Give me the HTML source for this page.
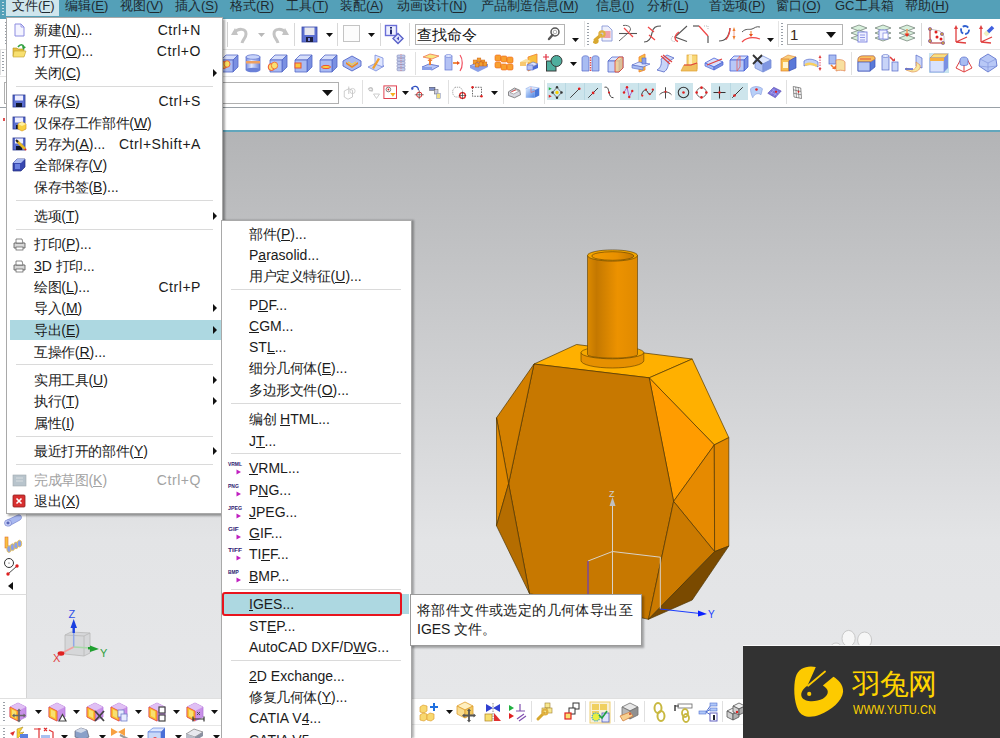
<!DOCTYPE html><html><head><meta charset="utf-8"><style>
html,body{margin:0;padding:0;width:1000px;height:738px;overflow:hidden;background:#fff;font-family:"Liberation Sans", sans-serif;}
.t{position:absolute;white-space:nowrap;line-height:16px;font-size:14px;color:#1b1b1b;font-weight:350;}
.m{position:absolute;white-space:nowrap;line-height:16px;font-size:13px;color:#1e2a30;font-weight:350;}
u{text-decoration:none;border-bottom:1px solid currentColor;line-height:12px;display:inline-block}
svg{position:absolute;overflow:visible}

</style></head><body>
<div style="position:absolute;left:27px;top:132px;width:973px;height:566px;background:linear-gradient(#b3b4b6 0%,#e3e4e6 72%,#e6e7e9 100%);"></div>
<div style="position:absolute;left:0px;top:132px;width:27px;height:566px;background:#fff;border-right:1px solid #d4d4d4;box-sizing:border-box;"></div>
<div style="position:absolute;left:0px;top:108px;width:27px;height:487px;background:#fff;border-right:1px solid #d4d4d4;border-bottom:1px solid #dcdcdc;box-sizing:border-box;"></div>
<div style="position:absolute;left:0px;top:18px;width:1000px;height:114px;background:#fff;"></div>
<div style="position:absolute;left:0px;top:49px;width:1000px;height:1px;background:#e3e3e3;"></div>
<div style="position:absolute;left:0px;top:76px;width:1000px;height:1px;background:#e3e3e3;"></div>
<div style="position:absolute;left:0px;top:107px;width:1000px;height:1px;background:#9aa1a7;"></div>
<div style="position:absolute;left:27px;top:130px;width:973px;height:2px;background:#62a6bc;"></div>
<div style="position:absolute;left:0px;top:0px;width:1000px;height:19px;background:#54a0b8;"></div>
<div style="position:absolute;left:6px;top:0px;width:53px;height:16px;background:#cfe5ec;"></div>
<div class="m" style="left:12px;top:-2px">文件(<u>F</u>)</div>
<div class="m" style="left:65px;top:-2px">编辑(<u>E</u>)</div>
<div class="m" style="left:120px;top:-2px">视图(<u>V</u>)</div>
<div class="m" style="left:175px;top:-2px">插入(<u>S</u>)</div>
<div class="m" style="left:230px;top:-2px">格式(<u>R</u>)</div>
<div class="m" style="left:286px;top:-2px">工具(<u>T</u>)</div>
<div class="m" style="left:340px;top:-2px">装配(<u>A</u>)</div>
<div class="m" style="left:397px;top:-2px">动画设计(<u>N</u>)</div>
<div class="m" style="left:481px;top:-2px">产品制造信息(<u>M</u>)</div>
<div class="m" style="left:596px;top:-2px">信息(<u>I</u>)</div>
<div class="m" style="left:647px;top:-2px">分析(<u>L</u>)</div>
<div class="m" style="left:709px;top:-2px">首选项(<u>P</u>)</div>
<div class="m" style="left:776px;top:-2px">窗口(<u>O</u>)</div>
<div class="m" style="left:835px;top:-2px">GC工具箱</div>
<div class="m" style="left:905px;top:-2px">帮助(<u>H</u>)</div>
<svg style="left:50px;top:605px" width="70" height="60" viewBox="0 0 70 60">
<g stroke="#b8b8b8" stroke-width="0.8">
<polygon points="15,30 21,27 40,28 40,48 34,51 15,49" fill="#d4d5d7" fill-opacity="0.9"/>
<path d="M15,30 L34,31 L40,28 M34,31 V51" fill="none"/>
</g>
<path d="M23.7,42 V22" stroke="#90a8e8" stroke-width="1.5"/>
<path d="M23.7,14 L20.5,23 H27 Z" fill="#1a40e0"/><rect x="22.5" y="22" width="2.4" height="6" fill="#1a40e0"/>
<text x="18.5" y="13" font-size="11" fill="#3050e8" font-family="Liberation Sans">Z</text>
<path d="M23.7,42 L12,48" stroke="#f0a0a0" stroke-width="1.5"/><ellipse cx="11" cy="48.5" rx="3.4" ry="2.2" fill="#e02020"/>
<text x="3" y="57" font-size="11" fill="#e04040" font-family="Liberation Sans">X</text>
<path d="M23.7,42 L40,43" stroke="#a8d8a8" stroke-width="1.5"/><path d="M49,44 L40,40.5 V47 Z" fill="#20a030"/><rect x="38" y="42" width="4" height="2.4" fill="#20a030"/>
<text x="50" y="52" font-size="11" fill="#30a040" font-family="Liberation Sans">Y</text>
</svg>
<svg style="left:0;top:0" width="1000" height="738" viewBox="0 0 1000 738">
<defs>
<linearGradient id="cyl" x1="0" x2="1" y1="0" y2="0">
<stop offset="0" stop-color="#dc8a00"/><stop offset="0.18" stop-color="#c47800"/><stop offset="0.6" stop-color="#ec9200"/><stop offset="1" stop-color="#e08a00"/></linearGradient>
<linearGradient id="hole" x1="0" x2="1" y1="0" y2="0">
<stop offset="0" stop-color="#f49c00"/><stop offset="0.6" stop-color="#e89000"/><stop offset="1" stop-color="#c27600"/></linearGradient>
</defs>
<g stroke="#4d3400" stroke-width="0.8" stroke-linejoin="round" stroke-opacity="0.85">
<polygon points="534,364 576.5,344.5 692.2,359 649.2,377.8" fill="#ffb000"/>
<polygon points="649.2,377.8 692.2,359 728.8,437.6 714.3,444.9" fill="#ffb000"/>
<polygon points="649.2,377.8 714.3,444.9 673.6,501.4" fill="#ff9c00"/>
<polygon points="534,364 649.2,377.8 673.6,501.4 648.5,619.3 529.5,593.6 508.6,483.7" fill="#c77800"/>
<polygon points="534,364 496.5,417.8 508.6,483.7" fill="#d38000"/>
<polygon points="496.5,417.8 496.5,525.8 508.6,483.7" fill="#df8800"/>
<polygon points="508.6,483.7 496.5,525.8 529.5,593.6" fill="#b56d00"/>
<polygon points="673.6,501.4 714.3,444.9 714.6,551.6" fill="#e68a00"/>
<polygon points="714.3,444.9 728.8,437.6 728.8,546.1 714.6,551.6" fill="#e28800"/>
<polygon points="673.6,501.4 714.6,551.6 648.5,619.3" fill="#cb7a00"/>
<polygon points="714.6,551.6 728.8,546.1 692.2,600 648.5,619.3" fill="#7a4a00"/>
</g>
<g stroke="#4d3400" stroke-width="0.7" stroke-opacity="0.8">
<path d="M581,352.6 L581,360.6 A31.4,7.4 0 0 0 643.8,360.6 L643.8,352.6 Z" fill="#e69000"/>
<ellipse cx="612.4" cy="352.6" rx="31.4" ry="6.2" fill="#f6a800"/>
<path d="M587.5,255.5 L587.5,354.5 A25,3.6 0 0 0 637.5,354.5 L637.5,255.5 Z" fill="url(#cyl)"/>
<ellipse cx="612.5" cy="255.5" rx="25" ry="5.6" fill="#f4a600"/>
<ellipse cx="612.8" cy="256" rx="21" ry="4.3" fill="url(#hole)"/>
</g>
<g stroke="#d9d2c8" stroke-width="1" fill="none">
<path d="M612.5,506 L612.5,594"/>
<path d="M612.5,551.5 L660.3,557.2 L660.3,609"/>
<path d="M612.5,551.5 L588,561"/>
</g>
<path d="M588,561 L588,594" stroke="#6a3cc0" stroke-width="1.2"/>
<path d="M612.5,497 l-3,9 h6 Z" fill="#c0c0c0"/>
<text x="609" y="497" font-size="9" fill="#d0d0d0" font-family="Liberation Sans">Z</text>
<path d="M660,609 L700,613.5" stroke="#1a3cff" stroke-width="1"/>
<path d="M707,614 l-9,-3.5 l0,6 Z" fill="#0a20ff"/>
<text x="708" y="618" font-size="10" fill="#2040ff" font-family="Liberation Sans">Y</text>
</svg>
<div style="position:absolute;left:0px;top:698px;width:743px;height:40px;background:#fff;"></div>
<div style="position:absolute;left:0px;top:698px;width:743px;height:1px;background:#e0e0e0;"></div>
<div style="position:absolute;left:0px;top:725px;width:222px;height:1px;background:#e6e6e6;"></div>
<div style="position:absolute;left:412px;top:724px;width:331px;height:1px;background:#ececec;"></div>
<div style="position:absolute;left:227px;top:22px;width:1px;height:25px;background:#d0d0d0"></div><div style="position:absolute;left:2px;top:2px;width:2px;height:1px;background:#c8dde4"></div><div style="position:absolute;left:2px;top:5px;width:2px;height:1px;background:#c8dde4"></div><div style="position:absolute;left:2px;top:8px;width:2px;height:1px;background:#c8dde4"></div><div style="position:absolute;left:2px;top:11px;width:2px;height:1px;background:#c8dde4"></div><div style="position:absolute;left:2px;top:14px;width:2px;height:1px;background:#c8dde4"></div><div style="position:absolute;left:5px;top:22px;width:2px;height:1px;background:#9aa0a8"></div><div style="position:absolute;left:5px;top:25px;width:2px;height:1px;background:#9aa0a8"></div><div style="position:absolute;left:5px;top:28px;width:2px;height:1px;background:#9aa0a8"></div><div style="position:absolute;left:5px;top:31px;width:2px;height:1px;background:#9aa0a8"></div><div style="position:absolute;left:5px;top:34px;width:2px;height:1px;background:#9aa0a8"></div><div style="position:absolute;left:5px;top:37px;width:2px;height:1px;background:#9aa0a8"></div><div style="position:absolute;left:5px;top:40px;width:2px;height:1px;background:#9aa0a8"></div><div style="position:absolute;left:5px;top:43px;width:2px;height:1px;background:#9aa0a8"></div><div style="position:absolute;left:2px;top:52px;width:2px;height:1px;background:#9aa0a8"></div><div style="position:absolute;left:2px;top:55px;width:2px;height:1px;background:#9aa0a8"></div><div style="position:absolute;left:2px;top:58px;width:2px;height:1px;background:#9aa0a8"></div><div style="position:absolute;left:2px;top:61px;width:2px;height:1px;background:#9aa0a8"></div><div style="position:absolute;left:2px;top:64px;width:2px;height:1px;background:#9aa0a8"></div><div style="position:absolute;left:2px;top:67px;width:2px;height:1px;background:#9aa0a8"></div><div style="position:absolute;left:2px;top:70px;width:2px;height:1px;background:#9aa0a8"></div><div style="position:absolute;left:0px;top:50px;width:1px;height:25px;background:#e0e0e0"></div><div style="position:absolute;left:4px;top:82px;width:6px;height:20px;border:1px solid #b0b0b0;background:#fff"></div><div style="position:absolute;left:3px;top:118px;width:2px;height:3px;background:#e05050"></div><svg style="left:230px;top:24px" width="20.0" height="20.0" viewBox="0 0 20 20"><path d="M5,4 L1,11 L8,11 Z" fill="#c4c4c4"/><path d="M4,9 C8,4 16,4 16,10 C16,14 13,15 12,19" stroke="#c4c4c4" stroke-width="3" fill="none"/></svg><svg style="left:258px;top:33px" width="7.0" height="4.0" viewBox="0 0 7 4"><path d="M0,0 H7 L3.5,4 Z" fill="#b8b8b8"/></svg><svg style="left:270px;top:24px" width="20.0" height="20.0" viewBox="0 0 20 20"><path d="M15,4 L19,11 L12,11 Z" fill="#c4c4c4"/><path d="M16,9 C12,4 4,4 4,10 C4,14 7,15 8,19" stroke="#c4c4c4" stroke-width="3" fill="none"/></svg><div style="position:absolute;left:294px;top:23px;width:1px;height:23px;background:#d8d8d8"></div><svg style="left:300px;top:24px" width="20.0" height="20.0" viewBox="0 0 20 20"><rect x="2" y="3" width="15" height="15" fill="#5b6fd0" stroke="#3a4aa8" stroke-width="0.8"/><rect x="4.5" y="3.5" width="10" height="7.5" fill="#e8e8ee"/><rect x="6" y="13" width="7" height="5" fill="#1e2040"/><rect x="8" y="14" width="2" height="3" fill="#7a8ae0"/></svg><svg style="left:326px;top:33px" width="7.0" height="4.0" viewBox="0 0 7 4"><path d="M0,0 H7 L3.5,4 Z" fill="#111"/></svg><div style="position:absolute;left:337px;top:23px;width:1px;height:23px;background:#d8d8d8"></div><div style="position:absolute;left:343px;top:25px;width:15px;height:15px;border:1px solid #c4c4c4;background:#fcfcfc"></div><svg style="left:368px;top:33px" width="7.0" height="4.0" viewBox="0 0 7 4"><path d="M0,0 H7 L3.5,4 Z" fill="#111"/></svg><div style="position:absolute;left:380px;top:23px;width:1px;height:23px;background:#d8d8d8"></div><svg style="left:384px;top:24px" width="20.0" height="20.0" viewBox="0 0 20 20"><rect x="1.5" y="1.5" width="11" height="10" fill="#eef0ff" stroke="#6b6fd8" stroke-width="1.4"/><rect x="6" y="3" width="2" height="1.6" fill="#222a70"/><rect x="6" y="5.5" width="2" height="4.8" fill="#222a70"/><polygon points="14,9.5 19,14.5 14,19.5 9,14.5" fill="#dfe3ff" stroke="#5860c8" stroke-width="1.4"/><path d="M15,12.5 L12.5,14.5 L15,16.5 Z" fill="#4a52c0"/></svg><div style="position:absolute;left:409px;top:23px;width:1px;height:23px;background:#d8d8d8"></div><div style="position:absolute;left:415px;top:24px;width:148px;height:19px;border:1px solid #b4b4b4;background:#fff"></div><div class="t" style="left:417px;top:26px;font-size:15px;line-height:17px;color:#111">查找命令</div><svg style="left:547px;top:26px" width="14.0" height="15.0" viewBox="0 0 14 15"><circle cx="8" cy="6" r="4" fill="#fff" stroke="#555" stroke-width="1.5"/><circle cx="8" cy="6" r="1.8" fill="none" stroke="#999" stroke-width="0.8"/><path d="M5.5,9 L2,13" stroke="#555" stroke-width="2.4" stroke-linecap="round"/></svg><svg style="left:572px;top:38px" width="7.0" height="4.0" viewBox="0 0 7 4"><path d="M0,0 H7 L3.5,4 Z" fill="#111"/></svg><div style="position:absolute;left:584px;top:21px;width:1px;height:26px;background:#e4e4e4"></div><div style="position:absolute;left:587px;top:23px;width:2px;height:1px;background:#9aa0a8"></div><div style="position:absolute;left:587px;top:26px;width:2px;height:1px;background:#9aa0a8"></div><div style="position:absolute;left:587px;top:29px;width:2px;height:1px;background:#9aa0a8"></div><div style="position:absolute;left:587px;top:32px;width:2px;height:1px;background:#9aa0a8"></div><div style="position:absolute;left:587px;top:35px;width:2px;height:1px;background:#9aa0a8"></div><div style="position:absolute;left:587px;top:38px;width:2px;height:1px;background:#9aa0a8"></div><div style="position:absolute;left:587px;top:41px;width:2px;height:1px;background:#9aa0a8"></div><div style="position:absolute;left:587px;top:44px;width:2px;height:1px;background:#9aa0a8"></div><svg style="left:593px;top:24px" width="20.0" height="20.0" viewBox="0 0 20 20"><path d="M9,2 H15 L19,6 V17 H9 Z" fill="#eef0fb" stroke="#8a98d8" stroke-width="0.9"/><rect x="10.5" y="7" width="7" height="7" fill="#f0a0a8"/><path d="M2,16 L8,11 M1.5,18 C3,19 4.5,18 4.2,16.5" stroke="#d8a830" stroke-width="3" fill="none" stroke-linecap="round"/><circle cx="9" cy="10" r="2.6" fill="none" stroke="#e0b040" stroke-width="2.2"/></svg><svg style="left:618px;top:24px" width="20.0" height="20.0" viewBox="0 0 20 20"><path d="M1,9.5 H19" stroke="#555" stroke-width="1.1"/><path d="M5,1.5 C12,0.5 15,5 10,9 C7,12 4,14 1,17" stroke="#555" stroke-width="0.9" fill="none"/><path d="M6,4 L15,13" stroke="#f04848" stroke-width="1.3"/></svg><svg style="left:643px;top:24px" width="20.0" height="20.0" viewBox="0 0 20 20"><path d="M1,18 C6,18 8,15 9,9 C10,3 13,2 18,2" stroke="#555" stroke-width="1.2" fill="none"/><path d="M5,3 L11,8 M6,11 L12,16" stroke="#f04848" stroke-width="1.3"/></svg><svg style="left:668px;top:24px" width="20.0" height="20.0" viewBox="0 0 20 20"><path d="M19,2 L7,13 L19,17.5" stroke="#555" stroke-width="1.1" fill="none"/><path d="M11,8 C5,12 7,17 10,17.5" stroke="#f04848" stroke-width="1.4" fill="none"/><path d="M5,12 C2,15 3,17.5 7,17.5" stroke="#999" stroke-width="0.8" stroke-dasharray="1,1" fill="none"/></svg><svg style="left:692px;top:24px" width="20.0" height="20.0" viewBox="0 0 20 20"><path d="M1,2 H7" stroke="#555" stroke-width="1.2"/><path d="M7,2 L16,12" stroke="#f04848" stroke-width="1.3" fill="none"/><path d="M16,12 V19" stroke="#555" stroke-width="1.2"/><path d="M12,2 H16 V6" stroke="#aaa" stroke-width="0.8" stroke-dasharray="1,1" fill="none"/></svg><svg style="left:717px;top:24px" width="20.0" height="20.0" viewBox="0 0 20 20"><path d="M2,17 C8,17 12,14 13,4" stroke="#555" stroke-width="1.2" fill="none"/><path d="M9,15.5 C11,13 13,9 13,4" stroke="#f04848" stroke-width="1.3" fill="none"/><path d="M17,6 V13" stroke="#f0a090" stroke-width="1"/><path d="M17,3 L15.5,7 H18.5 Z M17,16 L15.5,12 H18.5 Z" fill="#f08030"/></svg><svg style="left:741px;top:24px" width="20.0" height="20.0" viewBox="0 0 20 20"><path d="M1,8 C5,4 8,6 11,5 C14,4 15,2 19,3" stroke="#555" stroke-width="1" fill="none"/><path d="M1,18 C6,13 13,13 19,15" stroke="#f04848" stroke-width="1.3" fill="none"/><path d="M10,7 V11" stroke="#f0a060" stroke-width="1.4"/><path d="M8,10 L10,13 L12,10 Z" fill="#e85020"/></svg><svg style="left:767px;top:38px" width="7.0" height="4.0" viewBox="0 0 7 4"><path d="M0,0 H7 L3.5,4 Z" fill="#111"/></svg><div style="position:absolute;left:778px;top:21px;width:1px;height:26px;background:#e4e4e4"></div><div style="position:absolute;left:781px;top:23px;width:2px;height:1px;background:#9aa0a8"></div><div style="position:absolute;left:781px;top:26px;width:2px;height:1px;background:#9aa0a8"></div><div style="position:absolute;left:781px;top:29px;width:2px;height:1px;background:#9aa0a8"></div><div style="position:absolute;left:781px;top:32px;width:2px;height:1px;background:#9aa0a8"></div><div style="position:absolute;left:781px;top:35px;width:2px;height:1px;background:#9aa0a8"></div><div style="position:absolute;left:781px;top:38px;width:2px;height:1px;background:#9aa0a8"></div><div style="position:absolute;left:781px;top:41px;width:2px;height:1px;background:#9aa0a8"></div><div style="position:absolute;left:781px;top:44px;width:2px;height:1px;background:#9aa0a8"></div><div style="position:absolute;left:787px;top:24px;width:54px;height:19px;border:1px solid #b4b4b4;background:#fff"></div><div class="t" style="left:790px;top:26px;font-size:15px;line-height:17px;color:#3a2a20">1</div><svg style="left:826px;top:32px" width="10.0" height="6.0" viewBox="0 0 10 6"><path d="M0,0 H10 L5,6 Z" fill="#111"/></svg><svg style="left:849px;top:24px" width="20.0" height="20.0" viewBox="0 0 20 20"><polygon points="10,1 18,4 10,7 2,4" fill="#d8f0dc" stroke="#6a7a70" stroke-width="0.7"/><polygon points="10,6 18,9 10,12 2,9" fill="#d8f0dc" stroke="#6a7a70" stroke-width="0.7"/><polygon points="10,11 18,14 10,17 2,14" fill="#d8f0dc" stroke="#6a7a70" stroke-width="0.7"/><rect x="9" y="8" width="9" height="10" fill="#eef0ff" stroke="#7a82e0" stroke-width="0.9"/><path d="M11,11 H16 M11,13.5 H16 M11,16 H16" stroke="#7a82e0" stroke-width="0.8"/></svg><svg style="left:873px;top:24px" width="20.0" height="20.0" viewBox="0 0 20 20"><polygon points="10,1 18,4 10,7 2,4" fill="#d8f0dc" stroke="#6a7a70" stroke-width="0.7"/><polygon points="10,6 18,9 10,12 2,9" fill="#d8f0dc" stroke="#6a7a70" stroke-width="0.7"/><polygon points="10,11 18,14 10,17 2,14" fill="#d8f0dc" stroke="#6a7a70" stroke-width="0.7"/><rect x="6" y="6" width="8" height="9" fill="#eef0ff" stroke="#7a82e0" stroke-width="0.9"/><rect x="10" y="9" width="5" height="6" fill="#fff" stroke="#7a82e0" stroke-width="0.7"/></svg><svg style="left:897px;top:24px" width="20.0" height="20.0" viewBox="0 0 20 20"><polygon points="10,1 18,4 10,7 2,4" fill="#d8f0dc" stroke="#6a7a70" stroke-width="0.7"/><polygon points="10,6 18,9 10,12 2,9" fill="#d8f0dc" stroke="#6a7a70" stroke-width="0.7"/><polygon points="10,11 18,14 10,17 2,14" fill="#d8f0dc" stroke="#6a7a70" stroke-width="0.7"/><path d="M10,5 V11" stroke="#f0a060" stroke-width="1.5"/><path d="M7.5,9.5 L10,13 L12.5,9.5 Z" fill="#e83020"/></svg><div style="position:absolute;left:921px;top:23px;width:1px;height:23px;background:#d8d8d8"></div><svg style="left:927px;top:25px" width="20.0" height="20.0" viewBox="0 0 20 20"><path d="M3,4 L13,6 L17,11 L17,18 L5,18 L3,12 Z" fill="none" stroke="#999" stroke-width="0.6"/><path d="M3,4 V18 H17" stroke="#d04040" stroke-width="1" fill="none"/><circle cx="3" cy="4" r="1.6" fill="#c8a040" stroke="#8040a0" stroke-width="0.6"/><circle cx="15" cy="9" r="1.6" fill="#c8a040" stroke="#8040a0" stroke-width="0.6"/><circle cx="3" cy="16" r="1.6" fill="#c8a040" stroke="#8040a0" stroke-width="0.6"/><circle cx="16" cy="18" r="1.6" fill="#c8a040" stroke="#8040a0" stroke-width="0.6"/><circle cx="9" cy="7" r="1.5" fill="#e02020"/><circle cx="10" cy="12" r="1.5" fill="#e02020"/><circle cx="14" cy="14" r="1.5" fill="#e02020"/></svg><svg style="left:951px;top:24px" width="20.0" height="20.0" viewBox="0 0 20 20"><path d="M5,18 V3 M5,18 L16,13 M5,18 L15,19" stroke="#e04040" stroke-width="1.3" fill="none"/><path d="M5,1 L3,5 H7 Z" fill="#e04040"/><circle cx="14" cy="6" r="4" fill="none" stroke="#3060d0" stroke-width="1.8" stroke-dasharray="6,2"/></svg><svg style="left:976px;top:24px" width="20.0" height="20.0" viewBox="0 0 20 20"><path d="M5,18 V3 M5,18 L16,13 M5,18 L15,19" stroke="#e04040" stroke-width="1.3" fill="none"/><path d="M5,1 L3,5 H7 Z" fill="#e04040"/><path d="M10,10 L17,3" stroke="#4060e0" stroke-width="3.5"/><path d="M9,11 L12,8" stroke="#f0f0c0" stroke-width="4"/></svg><svg style="left:218px;top:53px" width="20.0" height="20.0" viewBox="0 0 20 20"><g stroke="#5468c8" stroke-width="0.8" stroke-linejoin="round"><polygon points="3,7 8,2 20,2 15,7" fill="#d6defa"/><polygon points="15,7 20,2 20,14 15,19" fill="#7a90e2"/><rect x="3" y="7" width="12" height="12" fill="#a9baf2"/></g><ellipse cx="6" cy="12" rx="3.2" ry="3.4" fill="#f8d040" stroke="#f05030" stroke-width="1"/><ellipse cx="9" cy="11" rx="3" ry="3.3" fill="#f8e060" stroke="#f05030" stroke-width="0.8"/></svg><svg style="left:243px;top:53px" width="20.0" height="20.0" viewBox="0 0 20 20"><defs><linearGradient id="gc" x1="0" x2="1"><stop offset="0" stop-color="#7b90e0"/><stop offset="0.4" stop-color="#dfe6ff"/><stop offset="1" stop-color="#6a80d8"/></linearGradient></defs><rect x="3" y="4" width="14" height="13" fill="url(#gc)" stroke="#5468c8" stroke-width="0.7"/><ellipse cx="10" cy="17" rx="7" ry="2.3" fill="#6a80d8"/><rect x="3" y="8" width="14" height="2.5" fill="#f0a060"/><ellipse cx="10" cy="4" rx="7" ry="2.3" fill="#c8d4fa" stroke="#5468c8" stroke-width="0.7"/></svg><svg style="left:267px;top:53px" width="20.0" height="20.0" viewBox="0 0 20 20"><g stroke="#5468c8" stroke-width="0.8" stroke-linejoin="round"><polygon points="3,7 8,2 20,2 15,7" fill="#d6defa"/><polygon points="15,7 20,2 20,14 15,19" fill="#7a90e2"/><rect x="3" y="7" width="12" height="12" fill="#a9baf2"/></g><ellipse cx="4.5" cy="14" rx="3.3" ry="3.5" fill="#f8e070" stroke="#f05030" stroke-width="1"/><ellipse cx="7.5" cy="12.5" rx="3.2" ry="3.4" fill="#f8e070" stroke="#f06030" stroke-width="0.8"/></svg><svg style="left:292px;top:53px" width="20.0" height="20.0" viewBox="0 0 20 20"><g stroke="#5468c8" stroke-width="0.8" stroke-linejoin="round"><polygon points="3,7 8,2 20,2 15,7" fill="#d6defa"/><polygon points="15,7 20,2 20,14 15,19" fill="#7a90e2"/><rect x="3" y="7" width="12" height="12" fill="#a9baf2"/></g><rect x="3" y="10" width="6" height="5" fill="#f8c840" stroke="#f05030" stroke-width="1"/></svg><svg style="left:317px;top:53px" width="20.0" height="20.0" viewBox="0 0 20 20"><g stroke="#5468c8" stroke-width="0.8" stroke-linejoin="round"><polygon points="3,7 8,2 20,2 15,7" fill="#d6defa"/><polygon points="15,7 20,2 20,14 15,19" fill="#7a90e2"/><rect x="3" y="7" width="12" height="12" fill="#a9baf2"/></g><ellipse cx="9" cy="14" rx="4.5" ry="1.6" fill="#f8d040" stroke="#f05030" stroke-width="1"/></svg><svg style="left:342px;top:53px" width="20.0" height="20.0" viewBox="0 0 20 20"><polygon points="10,3 19,8 19,13 10,18 1,13 1,8" fill="#a8b8f0" stroke="#5468c8" stroke-width="0.9"/><path d="M4,9 L10,13 L16,9 L16,11 L10,15 L4,11 Z" fill="#f08a20"/><path d="M6,9 L10,11.5 L14,9" stroke="#f8d040" stroke-width="1.2" fill="none"/></svg><svg style="left:366px;top:53px" width="20.0" height="20.0" viewBox="0 0 20 20"><polygon points="2,14 10,10 18,13 10,18" fill="#c8d4f8" stroke="#6a7ed8" stroke-width="0.7"/><polygon points="9,2 17,5 17,14 9,11" fill="#dfe6ff" stroke="#6a7ed8" stroke-width="0.7"/><path d="M6,15 L12,5 L14,6 L8,16 Z" fill="#f0a030"/></svg><svg style="left:391px;top:53px" width="20.0" height="20.0" viewBox="0 0 20 20"><rect x="6" y="2.0" width="8" height="3" rx="1" fill="#c4ccec" stroke="#8088b8" stroke-width="0.6"/><rect x="6" y="5.2" width="8" height="3" rx="1" fill="#c4ccec" stroke="#8088b8" stroke-width="0.6"/><rect x="6" y="8.4" width="8" height="3" rx="1" fill="#c4ccec" stroke="#8088b8" stroke-width="0.6"/><rect x="6" y="11.600000000000001" width="8" height="3" rx="1" fill="#c4ccec" stroke="#8088b8" stroke-width="0.6"/><rect x="6" y="14.8" width="8" height="3" rx="1" fill="#c4ccec" stroke="#8088b8" stroke-width="0.6"/><path d="M10,1 V19" stroke="#e06060" stroke-width="0.6" stroke-dasharray="1,1"/></svg><div style="position:absolute;left:415px;top:52px;width:1px;height:23px;background:#e0e0e0"></div><svg style="left:420px;top:53px" width="20.0" height="20.0" viewBox="0 0 20 20"><polygon points="2,14 9,11 19,13 12,17" fill="#b8c6f6" stroke="#5468c8" stroke-width="0.8"/><rect x="2" y="14" width="10" height="3" fill="#8aa0e8"/><polygon points="3,4 10,1 19,3 12,6" fill="#f8e880" stroke="#f08060" stroke-width="0.9"/><path d="M10,12 V7" stroke="#f08030" stroke-width="2"/><path d="M7.5,8 L10,5 L12.5,8 Z" fill="#f08030"/></svg><svg style="left:444px;top:53px" width="20.0" height="20.0" viewBox="0 0 20 20"><rect x="1" y="3" width="7" height="14" fill="#b4c2f4" stroke="#6074d0" stroke-width="0.7"/><ellipse cx="4.5" cy="3" rx="3.5" ry="1.5" fill="#dfe6ff" stroke="#6074d0" stroke-width="0.6"/><path d="M9,10 H14" stroke="#f08030" stroke-width="1.8"/><path d="M13,8 L16,10 L13,12 Z" fill="#e85020"/><path d="M16,2 C19,6 19,14 16,18" stroke="#f05060" stroke-width="1.2" fill="none"/></svg><svg style="left:469px;top:53px" width="20.0" height="20.0" viewBox="0 0 20 20"><polygon points="1,13 11,8 19,12 9,17" fill="#b8c6f6" stroke="#5468c8" stroke-width="0.8"/><path d="M1,13 V15 L9,19 L19,14 V12" fill="#8aa0e8"/><rect x="4.2" y="7" width="3.6" height="4" fill="#f0a030" stroke="#d06010" stroke-width="0.5"/><rect x="8.2" y="5" width="3.6" height="4" fill="#f0a030" stroke="#d06010" stroke-width="0.5"/><rect x="12.2" y="7" width="3.6" height="4" fill="#f0a030" stroke="#d06010" stroke-width="0.5"/><rect x="6.2" y="10" width="3.6" height="4" fill="#f0a030" stroke="#d06010" stroke-width="0.5"/><rect x="10.2" y="9" width="3.6" height="4" fill="#f0a030" stroke="#d06010" stroke-width="0.5"/><rect x="14.2" y="9" width="3.6" height="4" fill="#f0a030" stroke="#d06010" stroke-width="0.5"/></svg><svg style="left:494px;top:53px" width="20.0" height="20.0" viewBox="0 0 20 20"><rect x="1" y="2" width="6" height="6" rx="1.5" fill="#f8a030" stroke="#f06010" stroke-width="0.6"/><rect x="7" y="3" width="6" height="6" rx="1.5" fill="#f8a030" stroke="#f06010" stroke-width="0.6"/><rect x="13" y="4" width="6" height="6" rx="1.5" fill="#f8a030" stroke="#f06010" stroke-width="0.6"/><rect x="1" y="9" width="6" height="6" rx="1.5" fill="#f8a030" stroke="#f06010" stroke-width="0.6"/><rect x="7" y="11" width="6" height="6" rx="1.5" fill="#f8a030" stroke="#f06010" stroke-width="0.6"/><rect x="13" y="11" width="6" height="6" rx="1.5" fill="#f8a030" stroke="#f06010" stroke-width="0.6"/></svg><svg style="left:519px;top:53px" width="20.0" height="20.0" viewBox="0 0 20 20"><polygon points="9,4 18,1 18,14 9,18" fill="#f8c040" stroke="#f08030" stroke-width="0.8"/><polygon points="1,9 7,6 12,8 6,11" fill="#f8e0a0"/><rect x="1" y="9" width="6" height="4" fill="#f8c870"/><polygon points="8,12 14,9 19,11 13,14" fill="#dfe6ff" stroke="#5468c8" stroke-width="0.6"/><rect x="8" y="12" width="6" height="5" fill="#b4c2f4" stroke="#5468c8" stroke-width="0.6"/><polygon points="14,14 19,11 19,15 14,17" fill="#4a6ad8"/></svg><svg style="left:544px;top:53px" width="20.0" height="20.0" viewBox="0 0 20 20"><rect x="2.5" y="8" width="9.5" height="10" fill="#4fae9e" stroke="#3a3a3a" stroke-width="1"/><circle cx="12.5" cy="8" r="5.5" fill="#4fae9e" stroke="#3a3a3a" stroke-width="1"/><path d="M2,1 V7 M-1,4 H5" stroke="#e03040" stroke-width="1.2"/></svg><svg style="left:570px;top:62px" width="7.0" height="4.0" viewBox="0 0 7 4"><path d="M0,0 H7 L3.5,4 Z" fill="#111"/></svg><svg style="left:581px;top:53px" width="20.0" height="20.0" viewBox="0 0 20 20"><path d="M1,18 V5 C1,2 8,2 8,5 V18 Z" fill="#a8bcf2" stroke="#5468c8" stroke-width="0.7"/><path d="M11,18 V5 C11,2 18,2 18,5 V18 Z" fill="#a8bcf2" stroke="#5468c8" stroke-width="0.7"/><path d="M9.5,4 V18" stroke="#e05050" stroke-width="1.4" stroke-dasharray="1.5,1"/></svg><svg style="left:606px;top:53px" width="20.0" height="20.0" viewBox="0 0 20 20"><g stroke="#5468c8" stroke-width="0.8" stroke-linejoin="round"><polygon points="2,8 6,4 17,4 13,8" fill="#dfe6ff"/><polygon points="13,8 17,4 17,15 13,19" fill="#7a90e2"/><rect x="2" y="8" width="11" height="11" fill="#c4d0f8"/></g><path d="M9,8 L13,4 H17 V15 L13,19 H9 Z" fill="#f8d080" fill-opacity="0.75" stroke="#e04030" stroke-width="0.8"/></svg><svg style="left:631px;top:53px" width="20.0" height="20.0" viewBox="0 0 20 20"><polygon points="8,4 14,1 14,17 8,19" fill="#f8c040" stroke="#f08030" stroke-width="0.8"/><polygon points="1,12 8,9 19,11 12,14" fill="#dfe6ff" stroke="#5468c8" stroke-width="0.7"/><polygon points="1,12 12,14 12,17 1,15" fill="#a8bcf2" stroke="#5468c8" stroke-width="0.6"/><rect x="11" y="5" width="4" height="6" fill="#8aa0e8" stroke="#5468c8" stroke-width="0.6"/></svg><svg style="left:655px;top:53px" width="20.0" height="20.0" viewBox="0 0 20 20"><path d="M2,17 C6,15 7,10 6,6 L12,2 L19,5 L13,9 C14,13 12,17 9,19 Z" fill="#c8d4f8" stroke="#5468c8" stroke-width="0.8"/><path d="M6,3 L15,11 M8,2 L17,9" stroke="#e04040" stroke-width="1.2"/></svg><svg style="left:680px;top:53px" width="20.0" height="20.0" viewBox="0 0 20 20"><rect x="7" y="2" width="10" height="14" fill="#f8d878" stroke="#e0a030" stroke-width="0.7"/><rect x="9" y="2" width="3" height="14" fill="#fff0c0"/><path d="M1,18 L4,12 L11,12 L17,10 V18 Z" fill="#f0c060" stroke="#e0a030" stroke-width="0.7"/><path d="M4,12 L11,12 L17,10" stroke="#e04040" stroke-width="1.2" fill="none"/></svg><svg style="left:704px;top:53px" width="20.0" height="20.0" viewBox="0 0 20 20"><polygon points="1,10 10,5 19,9 10,14" fill="#d8e0fc" stroke="#4a62d8" stroke-width="0.8"/><polygon points="1,10 10,14 10,17 1,13" fill="#a8bcf2" stroke="#4a62d8" stroke-width="0.7"/><polygon points="10,14 19,9 19,12 10,17" fill="#7890e0" stroke="#4a62d8" stroke-width="0.7"/><path d="M3,12 L18,6" stroke="#e04040" stroke-width="1.2"/></svg><svg style="left:729px;top:53px" width="20.0" height="20.0" viewBox="0 0 20 20"><g stroke="#4a62d8" stroke-width="0.8" stroke-linejoin="round"><polygon points="1,7 5,3 19,3 15,7" fill="#d8e0fc"/><polygon points="15,7 19,3 19,14 15,18" fill="#7890e0"/><rect x="1" y="7" width="14" height="11" fill="#b8c8f6"/></g><path d="M8,7 L11,3 V14 L8,18 Z" fill="none" stroke="#e06060" stroke-width="0.8"/></svg><svg style="left:752px;top:53px" width="20.0" height="20.0" viewBox="0 0 20 20"><g stroke="#7890d8" stroke-width="0.8" stroke-linejoin="round"><polygon points="11,3 19,7.0 11,11 3,7.0" fill="#dfe8ff"/><polygon points="3,7.0 11,11 11,19 3,15.0" fill="#b0c2f4"/><polygon points="11,11 19,7.0 19,15.0 11,19" fill="#7f96e2"/></g><path d="M1,2 L10,11 M10,2 L1,11" stroke="#333" stroke-width="1.8"/></svg><svg style="left:778px;top:53px" width="20.0" height="20.0" viewBox="0 0 20 20"><polygon points="3,6 10,2 18,4 11,8" fill="#f8d080" stroke="#e08030" stroke-width="0.6"/><rect x="3" y="6" width="8" height="12" fill="#f8c050" stroke="#e08030" stroke-width="0.7"/><polygon points="11,8 18,4 18,15 11,18" fill="#5a78d8" stroke="#3a52b8" stroke-width="0.7"/><rect x="5" y="9" width="5" height="6" fill="#fff4d0"/></svg><svg style="left:802px;top:53px" width="20.0" height="20.0" viewBox="0 0 20 20"><path d="M2,8 C6,5 12,6 16,9 L16,14 C12,11 6,11 2,13 Z" fill="#c0d0f8" stroke="#5468c8" stroke-width="0.7"/><path d="M3,12 C7,10 12,11 15,13" stroke="#f8d060" stroke-width="2.5" fill="none"/><path d="M18,4 V16" stroke="#e04060" stroke-width="1" stroke-dasharray="1.5,1"/><path d="M16.5,5 L18,2 L19.5,5 Z M16.5,15 L18,18 L19.5,15 Z" fill="#e04040"/></svg><svg style="left:827px;top:53px" width="20.0" height="20.0" viewBox="0 0 20 20"><rect x="2" y="2" width="7" height="9" fill="#a8bcf2" stroke="#5468c8" stroke-width="0.7"/><path d="M9,7 C13,6 17,7 18,9 V18 C15,17 12,17 9,18 Z" fill="#f8e0a0" stroke="#e08050" stroke-width="0.7"/><path d="M4,12 L8,16" stroke="#f08030" stroke-width="1.6"/><path d="M5,16 H9 V12 Z" fill="#f07030"/></svg><div style="position:absolute;left:851px;top:52px;width:1px;height:23px;background:#e0e0e0"></div><svg style="left:856px;top:53px" width="20.0" height="20.0" viewBox="0 0 20 20"><path d="M2,7 C2,4 4,3 7,3 H17 C18,3 19,4 19,6 V14 L14,18 H2 Z" fill="#5a7ad8" stroke="#3a52b8" stroke-width="0.7"/><path d="M2,7 C2,4 4,3 7,3 H17 C18,3 19,4 19,6 L14,9 H2 Z" fill="#f8c060" stroke="#e08030" stroke-width="0.7"/><rect x="2" y="9" width="12" height="9" fill="#b8c8f6" stroke="#3a52b8" stroke-width="0.7"/><path d="M4,6 H15" stroke="#e05040" stroke-width="1"/></svg><svg style="left:880px;top:53px" width="20.0" height="20.0" viewBox="0 0 20 20"><rect x="2" y="3" width="7" height="14" fill="#c8d4f8" stroke="#5468c8" stroke-width="0.7"/><ellipse cx="5.5" cy="3" rx="3.5" ry="1.5" fill="#e8eeff" stroke="#5468c8" stroke-width="0.6"/><rect x="12" y="9" width="6" height="9" fill="#c8d4f8" stroke="#5468c8" stroke-width="0.7"/><path d="M10,4 L14,8" stroke="#e04040" stroke-width="1.6"/><path d="M12,8 H15 V5 Z" fill="#e04040"/></svg><svg style="left:904px;top:53px" width="20.0" height="20.0" viewBox="0 0 20 20"><polygon points="12,2 18,5 18,15 12,13" fill="#c8d4f8" stroke="#5468c8" stroke-width="0.7"/><path d="M2,15 L8,17 C12,16 13,13 12,9 L16,12 C17,16 14,19 8,19 L2,17 Z" fill="#f8e8a0" stroke="#e09050" stroke-width="0.7"/><path d="M1,16 H9" stroke="#4a62d8" stroke-width="1.5"/></svg><svg style="left:929px;top:53px" width="20.0" height="20.0" viewBox="0 0 20 20"><rect x="0" y="0" width="20" height="20" fill="#c8e4ee"/><polygon points="1,5 5,1 19,1 15,5" fill="#f8e080" stroke="#e08030" stroke-width="0.6"/><rect x="1" y="5" width="14" height="14" fill="#d8e2fc" stroke="#6a7ed8" stroke-width="0.6"/><polygon points="15,5 19,1 19,15 15,19" fill="#7a90e2"/><rect x="1" y="5" width="14" height="3" fill="#f8b040"/></svg><svg style="left:954px;top:53px" width="20.0" height="20.0" viewBox="0 0 20 20"><path d="M2,15 L7,6 H13 L18,15 L10,19 Z" fill="none" stroke="#e04040" stroke-width="1"/><path d="M10,12 V19" stroke="#e04040"/><path d="M6,7 C6,3 14,3 14,7 V11 C14,13 6,13 6,11 Z" fill="#a8bcf2" stroke="#5468c8" stroke-width="0.7"/></svg><svg style="left:978px;top:53px" width="20.0" height="20.0" viewBox="0 0 20 20"><polygon points="10,1 18,6 19,13 10,19 1,13 2,6" fill="#b8c8f6" stroke="#5468c8" stroke-width="0.8"/><path d="M2,6 L10,10 L18,6 M10,10 V19 M1,13 L10,14 L19,13" stroke="#7a8ed8" stroke-width="0.6" fill="none"/></svg><div style="position:absolute;left:200px;top:82px;width:137px;height:20px;border:1px solid #b0b0b0;background:#fff"></div><svg style="left:322px;top:90px" width="11.0" height="6.0" viewBox="0 0 11 6"><path d="M0,0 H11 L5.5,6 Z" fill="#111"/></svg><svg style="left:342px;top:85px" width="15.0" height="15.0" viewBox="0 0 20 20"><path d="M3,8 L9,5 L14,7 V16 L8,19 L3,16 Z" fill="none" stroke="#bbb" stroke-width="1"/><circle cx="14" cy="8" r="3.5" fill="none" stroke="#c4c4c4"/><path d="M9,2 V12" stroke="#bbb"/></svg><div style="position:absolute;left:362px;top:80px;width:1px;height:24px;background:#e0e0e0"></div><svg style="left:366px;top:85px" width="15.0" height="15.0" viewBox="0 0 20 20"><path d="M3,6 C6,2 10,4 8,8 L4,7" stroke="#c4c4c4" stroke-width="2" fill="none"/><path d="M10,12 H18 L14,18 Z" fill="none" stroke="#c8c8c8" stroke-width="1.2"/></svg><svg style="left:383px;top:85px" width="14.4" height="14.4" viewBox="0 0 16 16"><rect x="1" y="1" width="14" height="14" fill="#fff" stroke="#e04050" stroke-width="1.1"/><circle cx="6" cy="5" r="2.6" fill="none" stroke="#555" stroke-width="0.8"/><circle cx="6" cy="5" r="1" fill="#e02020"/><path d="M8,9 H14 L11,13 Z" fill="#f8b020"/></svg><svg style="left:402px;top:91px" width="7.0" height="4.0" viewBox="0 0 7 4"><path d="M0,0 H7 L3.5,4 Z" fill="#111"/></svg><svg style="left:411px;top:85px" width="15.0" height="15.0" viewBox="0 0 20 20"><path d="M1,5 C3,0 10,1 10,7" stroke="#3050c0" stroke-width="1.6" fill="none"/><path d="M0,3 L1,7 L4,5 Z" fill="#3050c0"/><circle cx="11" cy="13" r="3.5" fill="none" stroke="#e02020" stroke-width="1.3"/><path d="M11,7 V19 M5,13 H17" stroke="#333" stroke-width="0.8"/></svg><svg style="left:429px;top:85px" width="15.0" height="15.0" viewBox="0 0 20 20"><rect x="1" y="3" width="7" height="4" fill="#8090c8" stroke="#334" stroke-width="0.6"/><rect x="7" y="6" width="5" height="6" fill="#ccd" stroke="#555" stroke-width="0.6"/><rect x="10" y="11" width="5" height="7" fill="#f0e080" stroke="#8090c8" stroke-width="0.7"/></svg><div style="position:absolute;left:448px;top:80px;width:1px;height:24px;background:#e0e0e0"></div><svg style="left:452px;top:85px" width="15.0" height="15.0" viewBox="0 0 20 20"><path d="M4,3 H11 L14,7 V13 L11,16 H4 L1,12 V7 Z" fill="none" stroke="#777" stroke-width="0.9" stroke-dasharray="1.5,1.2"/><circle cx="14" cy="14" r="3.8" fill="none" stroke="#e02020" stroke-width="1.8"/><path d="M14,9 V19 M9,14 H19" stroke="#333" stroke-width="0.8"/></svg><svg style="left:471px;top:85px" width="15.0" height="15.0" viewBox="0 0 20 20"><rect x="2" y="3" width="12" height="12" fill="none" stroke="#444" stroke-width="1.1" stroke-dasharray="2,1.5"/><circle cx="2" cy="3" r="1.6" fill="#e02020"/><circle cx="14" cy="15" r="1.6" fill="#e02020"/></svg><svg style="left:491px;top:91px" width="7.0" height="4.0" viewBox="0 0 7 4"><path d="M0,0 H7 L3.5,4 Z" fill="#111"/></svg><div style="position:absolute;left:503px;top:80px;width:1px;height:24px;background:#e0e0e0"></div><svg style="left:507px;top:85px" width="15.0" height="15.0" viewBox="0 0 20 20"><path d="M2,9 L10,4 L17,7 L18,13 L10,17 L2,14 Z" fill="#d8d8e0" stroke="#555" stroke-width="0.9"/><path d="M4,10 L11,6 L16,8 L9,12 Z" fill="#fff" stroke="#666" stroke-width="0.6"/><path d="M6,9 L12,6.5" stroke="#e04040" stroke-width="1.2"/></svg><svg style="left:525px;top:85px" width="15.0" height="15.0" viewBox="0 0 20 20"><defs><linearGradient id="gbb" x1="0" x2="1" y1="0" y2="1"><stop offset="0" stop-color="#d8e8ff"/><stop offset="1" stop-color="#4a80e0"/></linearGradient></defs><polygon points="1,5 7,2 19,4 13,7" fill="#e8f0ff" stroke="#6a90e0" stroke-width="0.6"/><rect x="1" y="5" width="12" height="12" fill="url(#gbb)"/><polygon points="13,7 19,4 19,14 13,17" fill="#4a78d8"/><path d="M8,3 V10 L13,8" stroke="#e06060" stroke-width="0.8" fill="none"/></svg><div style="position:absolute;left:544px;top:80px;width:1px;height:24px;background:#e0e0e0"></div><div style="position:absolute;left:547px;top:83px;width:55px;height:17px;background:#cde5ec"></div><div style="position:absolute;left:620px;top:83px;width:36px;height:17px;background:#cde5ec"></div><div style="position:absolute;left:675px;top:83px;width:18px;height:17px;background:#cde5ec"></div><div style="position:absolute;left:711px;top:83px;width:37px;height:17px;background:#cde5ec"></div><div style="position:absolute;left:565px;top:83px;width:1px;height:17px;background:#b8d8e2"></div><div style="position:absolute;left:584px;top:83px;width:1px;height:17px;background:#b8d8e2"></div><div style="position:absolute;left:638px;top:83px;width:1px;height:17px;background:#b8d8e2"></div><div style="position:absolute;left:730px;top:83px;width:1px;height:17px;background:#b8d8e2"></div><svg style="left:548px;top:85px" width="15.0" height="15.0" viewBox="0 0 20 20"><path d="M1,3 L5,5 L1,7 Z" fill="#20b040"/><path d="M1,13 L5,15 L1,17 Z" fill="#e02020"/><polygon points="12,3 18,10 12,17 6,10" fill="none" stroke="#333" stroke-width="0.8"/><circle cx="12" cy="3" r="1.6" fill="#333"/><circle cx="18" cy="10" r="1.6" fill="#333"/><circle cx="12" cy="17" r="1.6" fill="#333"/><circle cx="6" cy="10" r="1.6" fill="#333"/><circle cx="12" cy="10" r="2.2" fill="#f8d000"/></svg><svg style="left:568px;top:85px" width="15.0" height="15.0" viewBox="0 0 20 20"><path d="M3,17 L15,5" stroke="#333" stroke-width="1.2"/><circle cx="15" cy="5" r="1.8" fill="#e02020"/></svg><svg style="left:586px;top:85px" width="15.0" height="15.0" viewBox="0 0 20 20"><path d="M3,17 L16,4" stroke="#333" stroke-width="1.2"/><circle cx="9.5" cy="10.5" r="1.8" fill="#e02020"/></svg><svg style="left:603px;top:85px" width="15.0" height="15.0" viewBox="0 0 20 20"><path d="M2,3 C7,2 7,6 8,10 C9,14 10,17 14,17" stroke="#333" stroke-width="1.3" fill="none"/><circle cx="8" cy="10" r="1.4" fill="#e02020"/></svg><svg style="left:621px;top:85px" width="15.0" height="15.0" viewBox="0 0 20 20"><path d="M4,10 L8,3 L11,16 L15,8" stroke="#a040d0" stroke-width="1" fill="none"/><circle cx="4" cy="10" r="1.6" fill="#e02020"/><circle cx="8" cy="3" r="1.6" fill="#e02020"/><circle cx="11" cy="16" r="1.6" fill="#e02020"/><circle cx="15" cy="8" r="1.6" fill="#e02020"/></svg><svg style="left:640px;top:85px" width="15.0" height="15.0" viewBox="0 0 20 20"><path d="M2,13 C5,4 9,6 11,11 C13,15 16,10 18,6" stroke="#333" stroke-width="1.3" fill="none"/><circle cx="3" cy="14" r="1.5" fill="#e02020"/><circle cx="8" cy="6" r="1.5" fill="#e02020"/><circle cx="13" cy="12" r="1.5" fill="#e02020"/><circle cx="17" cy="6" r="1.5" fill="#e02020"/></svg><svg style="left:658px;top:85px" width="15.0" height="15.0" viewBox="0 0 20 20"><path d="M2,13 C6,8 14,8 18,13" stroke="#333" stroke-width="1.2" fill="none"/><path d="M10,3 V18" stroke="#333" stroke-width="1.2"/><circle cx="10" cy="9" r="1.4" fill="#e02020"/></svg><svg style="left:676px;top:85px" width="15.0" height="15.0" viewBox="0 0 20 20"><circle cx="10" cy="10" r="7" fill="none" stroke="#333" stroke-width="1.4"/><circle cx="10" cy="10" r="1.7" fill="#e02020"/></svg><svg style="left:694px;top:85px" width="15.0" height="15.0" viewBox="0 0 20 20"><circle cx="10" cy="10" r="6.5" fill="none" stroke="#444" stroke-width="1"/><circle cx="10" cy="3.5" r="1.7" fill="#e02020"/><circle cx="16.5" cy="10" r="1.7" fill="#e02020"/><circle cx="10" cy="16.5" r="1.7" fill="#e02020"/><circle cx="3.5" cy="10" r="1.7" fill="#e02020"/></svg><svg style="left:712px;top:85px" width="15.0" height="15.0" viewBox="0 0 20 20"><path d="M10,2 V18 M2,10 H18" stroke="#333" stroke-width="1.4"/><circle cx="10" cy="10" r="1.6" fill="#e02020"/></svg><svg style="left:730px;top:85px" width="15.0" height="15.0" viewBox="0 0 20 20"><path d="M3,17 L17,3" stroke="#333" stroke-width="1.3"/><circle cx="6" cy="14" r="1.8" fill="#e02020"/></svg><svg style="left:749px;top:85px" width="15.0" height="15.0" viewBox="0 0 20 20"><path d="M2,5 C6,1 13,1 18,5 L16,13 C12,10 7,12 5,17 C3,13 2,9 2,5 Z" fill="#b8d0f8" stroke="#7a90d8" stroke-width="0.7"/><circle cx="10" cy="6" r="1.7" fill="#e02020"/></svg><svg style="left:767px;top:85px" width="15.0" height="15.0" viewBox="0 0 20 20"><polygon points="1,11 9,3 19,8 11,17" fill="#7a72d8" stroke="#4a40a8" stroke-width="0.7"/><path d="M4,9 L14,14 M7,6 L16,11 M5,12 L10,5 M9,15 L14,7" stroke="#c8c0f8" stroke-width="0.6"/><circle cx="12" cy="9" r="1.5" fill="#e02020"/></svg><div style="position:absolute;left:786px;top:80px;width:1px;height:24px;background:#e0e0e0"></div><svg style="left:791px;top:85px" width="15.0" height="15.0" viewBox="0 0 20 20"><polygon points="3,2 13,4 14,18 4,16" fill="none" stroke="#444" stroke-width="0.8"/><path d="M3.3,6.5 L13.3,8.5 M3.6,11 L13.6,13 M6.3,2.6 L7.3,16.6 M9.6,3.2 L10.6,17.2" stroke="#444" stroke-width="0.7"/><circle cx="10" cy="9" r="1.2" fill="#e02020"/></svg><svg style="left:3px;top:511px" width="20.0" height="20.0" viewBox="0 0 20 20"><path d="M4,9 L15,4 C18,3 20,7 17,9 L6,15 Z" fill="#a8b8f0" stroke="#6a78c8" stroke-width="0.6"/><ellipse cx="5" cy="12" rx="3.5" ry="3.2" fill="#c8d0f8" stroke="#6a78c8" stroke-width="0.6"/><ellipse cx="5" cy="12" rx="1.6" ry="1.4" fill="#5a68b8"/></svg><svg style="left:3px;top:535px" width="20.0" height="20.0" viewBox="0 0 20 20"><rect x="2" y="2" width="3" height="11" fill="#f8c040" stroke="#e07030" stroke-width="0.6"/><ellipse cx="6.0" cy="14.0" rx="2.2" ry="3.4" fill="#8aa0e8" stroke="#f0c040" stroke-width="0.8"/><ellipse cx="9.5" cy="12.2" rx="2.2" ry="3.4" fill="#8aa0e8" stroke="#f0c040" stroke-width="0.8"/><ellipse cx="13.0" cy="10.4" rx="2.2" ry="3.4" fill="#8aa0e8" stroke="#f0c040" stroke-width="0.8"/><ellipse cx="16.5" cy="8.6" rx="2.2" ry="3.4" fill="#8aa0e8" stroke="#f0c040" stroke-width="0.8"/></svg><svg style="left:3px;top:557px" width="20.0" height="20.0" viewBox="0 0 20 20"><circle cx="6" cy="6" r="4.5" fill="none" stroke="#333" stroke-width="1"/><circle cx="6" cy="6" r="0.6" fill="#333"/><path d="M5,17 L14,9" stroke="#333" stroke-width="0.9"/><circle cx="5" cy="17" r="1.7" fill="#e02020"/><circle cx="14" cy="9" r="1.7" fill="#e02020"/></svg><svg style="left:8px;top:582px" width="6.0" height="8.0" viewBox="0 0 6 8"><path d="M5,0 L0,4 L5,8 Z" fill="#111"/></svg><div style="position:absolute;left:3px;top:702px;width:2px;height:1px;background:#9aa0a8"></div><div style="position:absolute;left:3px;top:705px;width:2px;height:1px;background:#9aa0a8"></div><div style="position:absolute;left:3px;top:708px;width:2px;height:1px;background:#9aa0a8"></div><div style="position:absolute;left:3px;top:711px;width:2px;height:1px;background:#9aa0a8"></div><div style="position:absolute;left:3px;top:714px;width:2px;height:1px;background:#9aa0a8"></div><div style="position:absolute;left:3px;top:717px;width:2px;height:1px;background:#9aa0a8"></div><div style="position:absolute;left:3px;top:720px;width:2px;height:1px;background:#9aa0a8"></div><svg style="left:8px;top:702px" width="20.0" height="20.0" viewBox="0 0 20 20"><polygon points="10,1 18,5 18,15 10,19 2,15 2,5" fill="#c890e8" stroke="#b070d8" stroke-width="0.7"/><polygon points="10,1 18,5 10,9 2,5" fill="#e0c0f4"/><polygon points="2,5 10,9 10,19 2,15" fill="#f8c030" stroke="#f05030" stroke-width="0.8"/><polygon points="4,7.5 8,9.5 8,16 4,14" fill="#f8e070"/><path d="M11,8 V19 M5.5,13.5 H16.5" stroke="#666" stroke-width="1.6"/><path d="M11,6.5 L9,9 H13 Z M11,20.5 L9,18 H13 Z M4,13.5 L6.5,11.5 V15.5 Z M18,13.5 L15.5,11.5 V15.5 Z" fill="#666"/></svg><svg style="left:47px;top:702px" width="20.0" height="20.0" viewBox="0 0 20 20"><polygon points="10,1 18,5 18,15 10,19 2,15 2,5" fill="#c890e8" stroke="#b070d8" stroke-width="0.7"/><polygon points="10,1 18,5 10,9 2,5" fill="#e0c0f4"/><polygon points="2,5 10,9 10,19 2,15" fill="#f8c030" stroke="#f05030" stroke-width="0.8"/><polygon points="4,7.5 8,9.5 8,16 4,14" fill="#f8e070"/><path d="M12,19 L15.5,12.5 L19,19 Z" fill="#fff" stroke="#444" stroke-width="1.2"/></svg><svg style="left:85px;top:702px" width="20.0" height="20.0" viewBox="0 0 20 20"><polygon points="10,1 18,5 18,15 10,19 2,15 2,5" fill="#c890e8" stroke="#b070d8" stroke-width="0.7"/><polygon points="10,1 18,5 10,9 2,5" fill="#e0c0f4"/><polygon points="2,5 10,9 10,19 2,15" fill="#f8c030" stroke="#f05030" stroke-width="0.8"/><polygon points="4,7.5 8,9.5 8,16 4,14" fill="#f8e070"/><path d="M10,9 L19,19 M19,9 L10,19" stroke="#444" stroke-width="1.8"/></svg><svg style="left:109px;top:702px" width="20.0" height="20.0" viewBox="0 0 20 20"><polygon points="10,1 18,5 18,15 10,19 2,15 2,5" fill="#c890e8" stroke="#b070d8" stroke-width="0.7"/><polygon points="10,1 18,5 10,9 2,5" fill="#e0c0f4"/><polygon points="2,5 10,9 10,19 2,15" fill="#f8c030" stroke="#f05030" stroke-width="0.8"/><polygon points="4,7.5 8,9.5 8,16 4,14" fill="#f8e070"/><rect x="9" y="8" width="6" height="7" fill="#e8ecff" stroke="#7080c8" stroke-width="0.8"/><rect x="12" y="12" width="6" height="7" fill="#e8ecff" stroke="#7080c8" stroke-width="0.8"/></svg><svg style="left:147px;top:702px" width="20.0" height="20.0" viewBox="0 0 20 20"><polygon points="10,1 18,5 18,15 10,19 2,15 2,5" fill="#c890e8" stroke="#b070d8" stroke-width="0.7"/><polygon points="10,1 18,5 10,9 2,5" fill="#e0c0f4"/><polygon points="2,5 10,9 10,19 2,15" fill="#f8c030" stroke="#f05030" stroke-width="0.8"/><polygon points="4,7.5 8,9.5 8,16 4,14" fill="#f8e070"/><rect x="12" y="5" width="6" height="6" fill="#fff" stroke="#444" stroke-width="1.2"/><rect x="12" y="13" width="6" height="6" fill="#fff" stroke="#444" stroke-width="1.2"/></svg><svg style="left:185px;top:702px" width="20.0" height="20.0" viewBox="0 0 20 20"><polygon points="10,1 18,5 18,15 10,19 2,15 2,5" fill="#c890e8" stroke="#b070d8" stroke-width="0.7"/><polygon points="10,1 18,5 10,9 2,5" fill="#e0c0f4"/><polygon points="2,5 10,9 10,19 2,15" fill="#f8c030" stroke="#f05030" stroke-width="0.8"/><polygon points="4,7.5 8,9.5 8,16 4,14" fill="#f8e070"/><path d="M8,17 H19 M8,14.5 V19.5 M19,14.5 V19.5" stroke="#333" stroke-width="1.2"/><path d="M12,10 L15,13 M15,10 L12,13" stroke="#555"/></svg><svg style="left:35px;top:710px" width="7.0" height="4.0" viewBox="0 0 7 4"><path d="M0,0 H7 L3.5,4 Z" fill="#111"/></svg><svg style="left:73px;top:710px" width="7.0" height="4.0" viewBox="0 0 7 4"><path d="M0,0 H7 L3.5,4 Z" fill="#111"/></svg><svg style="left:135px;top:710px" width="7.0" height="4.0" viewBox="0 0 7 4"><path d="M0,0 H7 L3.5,4 Z" fill="#111"/></svg><svg style="left:173px;top:710px" width="7.0" height="4.0" viewBox="0 0 7 4"><path d="M0,0 H7 L3.5,4 Z" fill="#111"/></svg><svg style="left:211px;top:710px" width="7.0" height="4.0" viewBox="0 0 7 4"><path d="M0,0 H7 L3.5,4 Z" fill="#111"/></svg><svg style="left:419px;top:702px" width="20.0" height="20.0" viewBox="0 0 20 20"><polygon points="1,5 4,3 8,4 8,9 5,11 1,10" fill="#f8d870" stroke="#e0a030" stroke-width="0.7"/><polygon points="1,13 4,11 8,12 8,17 5,19 1,18" fill="#f8d870" stroke="#e0a030" stroke-width="0.7"/><polygon points="8,13 11,11 15,12 15,17 12,19 8,18" fill="#f8d870" stroke="#e0a030" stroke-width="0.7"/><path d="M15,1 V9 M11,5 H19" stroke="#2070e0" stroke-width="2"/></svg><svg style="left:446px;top:710px" width="7.0" height="4.0" viewBox="0 0 7 4"><path d="M0,0 H7 L3.5,4 Z" fill="#111"/></svg><svg style="left:456px;top:701px" width="22.0" height="22.0" viewBox="0 0 22 22"><g stroke="#e0a030" stroke-width="0.8" stroke-linejoin="round"><polygon points="9,1 17,5.0 9,9 1,5.0" fill="#fff0c0"/><polygon points="1,5.0 9,9 9,17 1,13.0" fill="#f8dc90"/><polygon points="9,9 17,5.0 17,13.0 9,17" fill="#f0c860"/></g><path d="M13,9 V20 M7.5,14.5 H18.5" stroke="#555" stroke-width="1.8"/><path d="M13,7.5 L11,10 H15 Z M13,21.5 L11,19 H15 Z M6,14.5 L8.5,12.5 V16.5 Z M20,14.5 L17.5,12.5 V16.5 Z" fill="#555"/></svg><svg style="left:483px;top:702px" width="20.0" height="20.0" viewBox="0 0 20 20"><path d="M3,2 L10,6 L17,2 V10 L10,6 L3,10 Z" fill="#3040d0"/><path d="M10,1 V19" stroke="#888" stroke-dasharray="1.5,1"/><rect x="2" y="12" width="7" height="7" fill="#f8e070" stroke="#b08020" stroke-width="0.7"/><path d="M11,19 V11 L18,19 Z" fill="#e03030"/></svg><svg style="left:507px;top:702px" width="20.0" height="20.0" viewBox="0 0 20 20"><path d="M2,3 L7,6 L2,9 Z" fill="#20b040"/><path d="M2,11 L7,14 L2,17 Z" fill="#e02020"/><path d="M13,2 V9 M9,9 H18" stroke="#8050b0" stroke-width="1.2"/><path d="M10,17 L17,12 M12,19 L19,14" stroke="#8050b0" stroke-width="1.2"/></svg><div style="position:absolute;left:531px;top:701px;width:1px;height:21px;background:#e0e0e0"></div><svg style="left:536px;top:702px" width="20.0" height="20.0" viewBox="0 0 20 20"><rect x="9" y="1" width="5" height="5" fill="#f8e890" stroke="#a08030" stroke-width="0.6"/><rect x="6" y="6" width="5" height="5" fill="#f8e890" stroke="#a08030" stroke-width="0.6"/><rect x="11" y="6" width="5" height="5" fill="#f8e890" stroke="#a08030" stroke-width="0.6"/><path d="M2,17 L8,11" stroke="#d8a830" stroke-width="3" stroke-linecap="round"/><circle cx="9" cy="10" r="2.5" fill="none" stroke="#e0b040" stroke-width="2"/></svg><svg style="left:563px;top:702px" width="20.0" height="20.0" viewBox="0 0 20 20"><rect x="10" y="1" width="6" height="6" fill="#fff" stroke="#333" stroke-width="1"/><rect x="6" y="6" width="6" height="6" fill="#fff" stroke="#333" stroke-width="1"/><rect x="2" y="11" width="6" height="6" fill="#f8e070" stroke="#e02020" stroke-width="1.2"/></svg><div style="position:absolute;left:585px;top:701px;width:1px;height:21px;background:#e0e0e0"></div><svg style="left:590px;top:702px" width="20.0" height="20.0" viewBox="0 0 20 20"><rect x="0" y="0" width="20" height="21" fill="#f8f0d8" stroke="#f0d070" stroke-width="1"/><rect x="2" y="2" width="7" height="6" fill="#f0d060"/><rect x="10" y="2" width="7" height="6" fill="#f0d060"/><rect x="2" y="9" width="7" height="6" fill="#f0d060"/><circle cx="6" cy="15" r="4" fill="#e8f040" stroke="#30a0e0" stroke-width="1.2" stroke-dasharray="1.2,1"/><rect x="12" y="11" width="7" height="9" fill="#e0e4ff" stroke="#5060c0" stroke-width="0.8"/><path d="M9,13 L12,16 L17,9" stroke="#20a040" stroke-width="1.6" fill="none"/></svg><div style="position:absolute;left:614px;top:701px;width:1px;height:21px;background:#e0e0e0"></div><svg style="left:619px;top:702px" width="20.0" height="20.0" viewBox="0 0 20 20"><g stroke="#707070" stroke-width="0.8" stroke-linejoin="round"><polygon points="11,1 19,5.0 11,9 3,5.0" fill="#e8e8e8"/><polygon points="3,5.0 11,9 11,17 3,13.0" fill="#b8b8b8"/><polygon points="11,9 19,5.0 19,13.0 11,17" fill="#909090"/></g><polygon points="1,14 11,10 14,14 4,19" fill="#f8d090" stroke="#d08040" stroke-width="0.8"/><circle cx="11" cy="12" r="0.9" fill="#c03030"/></svg><div style="position:absolute;left:644px;top:701px;width:1px;height:21px;background:#e0e0e0"></div><svg style="left:650px;top:702px" width="20.0" height="20.0" viewBox="0 0 20 20"><ellipse cx="8" cy="6" rx="3.5" ry="5" fill="none" stroke="#c8b840" stroke-width="2"/><ellipse cx="11" cy="14" rx="3.5" ry="5" fill="none" stroke="#c8b840" stroke-width="2"/></svg><svg style="left:673px;top:702px" width="20.0" height="20.0" viewBox="0 0 20 20"><rect x="5" y="2" width="14" height="4" fill="#fff" stroke="#666" stroke-width="0.8"/><path d="M2,3 V9" stroke="#333" stroke-width="1.4"/><path d="M2,4 H6" stroke="#333"/><ellipse cx="12" cy="11" rx="3" ry="4" fill="none" stroke="#c8b840" stroke-width="1.8"/><ellipse cx="13" cy="16" rx="3" ry="4" fill="none" stroke="#c8b840" stroke-width="1.8"/></svg><svg style="left:698px;top:702px" width="20.0" height="20.0" viewBox="0 0 20 20"><path d="M1,10 H8 L13,3 M8,10 L13,7 M8,10 L13,13" stroke="#5070d0" stroke-width="1" fill="none"/><rect x="1" y="9" width="7" height="3" fill="#b0c8f8" stroke="#5070d0" stroke-width="0.6"/><rect x="12" y="1" width="7" height="3" fill="#b0c8f8" stroke="#5070d0" stroke-width="0.6"/><rect x="12" y="6" width="7" height="3" fill="#b0c8f8" stroke="#5070d0" stroke-width="0.6"/><rect x="12" y="11" width="7" height="8" fill="#fff" stroke="#6060c0" stroke-width="1"/><rect x="15" y="13" width="2" height="5" fill="#223"/></svg><div style="position:absolute;left:722px;top:701px;width:1px;height:21px;background:#e0e0e0"></div><svg style="left:726px;top:702px" width="20.0" height="20.0" viewBox="0 0 20 20"><g stroke="#555" stroke-width="0.8" stroke-linejoin="round"><polygon points="7,6 13,9.0 7,12 1,9.0" fill="#f0f0f0"/><polygon points="1,9.0 7,12 7,18 1,15.0" fill="#d0d0d0"/><polygon points="7,12 13,9.0 13,15.0 7,18" fill="#b0b0b0"/></g><g stroke="#555" stroke-width="0.8" stroke-linejoin="round"><polygon points="13,1 19,4.0 13,7 7,4.0" fill="#f0f0f0"/><polygon points="7,4.0 13,7 13,13 7,10.0" fill="#d0d0d0"/><polygon points="13,7 19,4.0 19,10.0 13,13" fill="#b0b0b0"/></g><circle cx="11" cy="10" r="1.2" fill="#e02020"/></svg><div style="position:absolute;left:3px;top:728px;width:2px;height:1px;background:#9aa0a8"></div><div style="position:absolute;left:3px;top:731px;width:2px;height:1px;background:#9aa0a8"></div><div style="position:absolute;left:3px;top:734px;width:2px;height:1px;background:#9aa0a8"></div><div style="position:absolute;left:3px;top:737px;width:2px;height:1px;background:#9aa0a8"></div><svg style="left:9px;top:727px" width="20.0" height="20.0" viewBox="0 0 20 20"><path d="M1,6 L6,4 L4,9 Z" fill="#e03030"/><path d="M8,2 L14,0 L10,6 L15,5 L8,12 Z" fill="#f8d030" stroke="#a08020" stroke-width="0.5"/><rect x="11" y="7" width="8" height="8" fill="#5a80e0"/></svg><svg style="left:33px;top:727px" width="20.0" height="20.0" viewBox="0 0 20 20"><path d="M1,2 H8 M6,1 V12 M11,1 L14,4 M14,1 L11,4 M16,3 L20,5 V12" stroke="#e03030" stroke-width="1.2" fill="none"/><rect x="8" y="8" width="9" height="6" fill="#a8c0f0"/></svg><svg style="left:73px;top:727px" width="20.0" height="20.0" viewBox="0 0 20 20"><polygon points="2,4 8,1 14,3 16,10 10,13 2,10" fill="#8aa0c8" stroke="#556" stroke-width="0.6"/><polygon points="2,4 8,1 14,3 8,6" fill="#d0d8e8"/></svg><svg style="left:110px;top:727px" width="20.0" height="20.0" viewBox="0 0 20 20"><path d="M1,1 L8,5 L15,1 V9 L8,5 L1,9 Z" fill="#f8a040"/><path d="M10,8 L18,12" stroke="#999" stroke-width="2"/></svg><svg style="left:147px;top:727px" width="20.0" height="20.0" viewBox="0 0 20 20"><polygon points="1,5 6,1 18,1 14,5" fill="#dfe8ff" stroke="#4a70d8" stroke-width="0.6"/><rect x="1" y="5" width="13" height="10" fill="#c8d8f8" stroke="#4a70d8" stroke-width="0.6"/><polygon points="14,5 18,1 18,11 14,15" fill="#4a70d8"/><circle cx="8" cy="12" r="2" fill="#e04040"/></svg><svg style="left:185px;top:727px" width="20.0" height="20.0" viewBox="0 0 20 20"><polygon points="1,7 9,2 18,5 10,10" fill="#e8e8ee" stroke="#666" stroke-width="0.6"/><polygon points="1,7 10,10 10,14 1,11" fill="#b8bcc8"/><polygon points="10,10 18,5 18,9 10,14" fill="#8a90a0"/></svg><svg style="left:61px;top:735px" width="7.0" height="4.0" viewBox="0 0 7 4"><path d="M0,0 H7 L3.5,4 Z" fill="#111"/></svg><svg style="left:99px;top:735px" width="7.0" height="4.0" viewBox="0 0 7 4"><path d="M0,0 H7 L3.5,4 Z" fill="#111"/></svg><svg style="left:137px;top:735px" width="7.0" height="4.0" viewBox="0 0 7 4"><path d="M0,0 H7 L3.5,4 Z" fill="#111"/></svg><svg style="left:175px;top:735px" width="7.0" height="4.0" viewBox="0 0 7 4"><path d="M0,0 H7 L3.5,4 Z" fill="#111"/></svg><svg style="left:213px;top:735px" width="7.0" height="4.0" viewBox="0 0 7 4"><path d="M0,0 H7 L3.5,4 Z" fill="#111"/></svg>
<div style="position:absolute;left:6px;top:17px;width:217px;height:497px;background:#fff;border:1px solid #a9a9a9;box-sizing:border-box;box-shadow:2px 2px 2px rgba(0,0,0,.35);"></div>
<div style="position:absolute;left:10px;top:320px;width:211px;height:20px;background:#add8e1;"></div>
<div class="t" style="left:34px;top:22px;"><span style="letter-spacing:-0.4px">新建</span>(<u>N</u>)...</div>
<div class="t" style="right:799px;top:22px;letter-spacing:0.55px;">Ctrl+N</div>
<div class="t" style="left:34px;top:43px;"><span style="letter-spacing:-0.4px">打开</span>(<u>O</u>)...</div>
<div class="t" style="right:799px;top:43px;letter-spacing:0.55px;">Ctrl+O</div>
<div class="t" style="left:34px;top:65px;"><span style="letter-spacing:-0.4px">关闭</span>(<u>C</u>)</div>
<svg style="left:213px;top:69px" width="5" height="8"><path d="M0 0L4 4L0 8Z" fill="#111"/></svg>
<div style="position:absolute;left:16px;top:86px;width:197px;height:1px;background:#dadada;"></div>
<div class="t" style="left:34px;top:93px;"><span style="letter-spacing:-0.4px">保存</span>(<u>S</u>)</div>
<div class="t" style="right:799px;top:93px;letter-spacing:0.55px;">Ctrl+S</div>
<div class="t" style="left:34px;top:115px;"><span style="letter-spacing:-0.4px">仅保存工作部件</span>(<u>W</u>)</div>
<div class="t" style="left:34px;top:136px;"><span style="letter-spacing:-0.4px">另存为</span>(<u>A</u>)...</div>
<div class="t" style="right:799px;top:136px;letter-spacing:0.55px;">Ctrl+Shift+A</div>
<div class="t" style="left:34px;top:157px;"><span style="letter-spacing:-0.4px">全部保存</span>(<u>V</u>)</div>
<div class="t" style="left:34px;top:179px;"><span style="letter-spacing:-0.4px">保存书签</span>(<u>B</u>)...</div>
<div style="position:absolute;left:16px;top:200px;width:197px;height:1px;background:#dadada;"></div>
<div class="t" style="left:34px;top:208px;"><span style="letter-spacing:-0.4px">选项</span>(<u>T</u>)</div>
<svg style="left:213px;top:212px" width="5" height="8"><path d="M0 0L4 4L0 8Z" fill="#111"/></svg>
<div style="position:absolute;left:16px;top:229px;width:197px;height:1px;background:#dadada;"></div>
<div class="t" style="left:34px;top:236px;"><span style="letter-spacing:-0.4px">打印</span>(<u>P</u>)...</div>
<div class="t" style="left:34px;top:258px;"><u>3</u>D <span style="letter-spacing:-0.4px">打印</span>...</div>
<div class="t" style="left:34px;top:279px;"><span style="letter-spacing:-0.4px">绘图</span>(<u>L</u>)...</div>
<div class="t" style="right:799px;top:279px;letter-spacing:0.55px;">Ctrl+P</div>
<div class="t" style="left:34px;top:300px;"><span style="letter-spacing:-0.4px">导入</span>(<u>M</u>)</div>
<svg style="left:213px;top:304px" width="5" height="8"><path d="M0 0L4 4L0 8Z" fill="#111"/></svg>
<div class="t" style="left:34px;top:322px;"><span style="letter-spacing:-0.4px">导出</span>(<u>E</u>)</div>
<svg style="left:213px;top:326px" width="5" height="8"><path d="M0 0L4 4L0 8Z" fill="#111"/></svg>
<div class="t" style="left:34px;top:344px;"><span style="letter-spacing:-0.4px">互操作</span>(<u>R</u>)...</div>
<div style="position:absolute;left:16px;top:364px;width:197px;height:1px;background:#dadada;"></div>
<div class="t" style="left:34px;top:372px;"><span style="letter-spacing:-0.4px">实用工具</span>(<u>U</u>)</div>
<svg style="left:213px;top:376px" width="5" height="8"><path d="M0 0L4 4L0 8Z" fill="#111"/></svg>
<div class="t" style="left:34px;top:393px;"><span style="letter-spacing:-0.4px">执行</span>(<u>T</u>)</div>
<svg style="left:213px;top:397px" width="5" height="8"><path d="M0 0L4 4L0 8Z" fill="#111"/></svg>
<div class="t" style="left:34px;top:415px;"><span style="letter-spacing:-0.4px">属性</span>(<u>I</u>)</div>
<div style="position:absolute;left:16px;top:436px;width:197px;height:1px;background:#dadada;"></div>
<div class="t" style="left:34px;top:443px;"><span style="letter-spacing:-0.4px">最近打开的部件</span>(<u>Y</u>)</div>
<svg style="left:213px;top:447px" width="5" height="8"><path d="M0 0L4 4L0 8Z" fill="#111"/></svg>
<div style="position:absolute;left:16px;top:464px;width:197px;height:1px;background:#dadada;"></div>
<div class="t" style="left:34px;top:472px;color:#a3a3a3;"><span style="letter-spacing:-0.4px">完成草图</span>(<u>K</u>)</div>
<div class="t" style="right:799px;top:472px;letter-spacing:0.55px;color:#a3a3a3;">Ctrl+Q</div>
<div class="t" style="left:34px;top:493px;"><span style="letter-spacing:-0.4px">退出</span>(<u>X</u>)</div>
<div style="position:absolute;left:221px;top:220px;width:191px;height:518px;background:#fff;border:1px solid #a9a9a9;border-bottom:none;box-sizing:border-box;box-shadow:2px 0 2px rgba(0,0,0,.3);"></div>
<div style="position:absolute;left:222px;top:594px;width:187px;height:20px;background:#add8e1;"></div>
<div style="position:absolute;left:222px;top:592px;width:180px;height:24px;border:2px solid #e8141e;border-radius:3px;box-sizing:border-box;"></div>
<div class="t" style="left:249px;top:226px"><span style="letter-spacing:-0.4px">部件</span>(<u>P</u>)...</div>
<div class="t" style="left:249px;top:247px">P<u>a</u>rasolid...</div>
<div class="t" style="left:249px;top:268px"><span style="letter-spacing:-0.4px">用户定义特征</span>(<u>U</u>)...</div>
<div style="position:absolute;left:231px;top:289px;width:170px;height:1px;background:#dadada;"></div>
<div class="t" style="left:249px;top:297px">P<u>D</u>F...</div>
<div class="t" style="left:249px;top:318px"><u>C</u>GM...</div>
<div class="t" style="left:249px;top:339px">ST<u>L</u>...</div>
<div class="t" style="left:249px;top:360px"><span style="letter-spacing:-0.4px">细分几何体</span>(<u>E</u>)...</div>
<div class="t" style="left:249px;top:382px"><span style="letter-spacing:-0.4px">多边形文件</span>(<u>O</u>)...</div>
<div style="position:absolute;left:231px;top:403px;width:170px;height:1px;background:#dadada;"></div>
<div class="t" style="left:249px;top:411px"><span style="letter-spacing:-0.4px">编创</span> <u>H</u>TML...</div>
<div class="t" style="left:249px;top:433px">J<u>T</u>...</div>
<div style="position:absolute;left:231px;top:453px;width:170px;height:1px;background:#dadada;"></div>
<div class="t" style="left:249px;top:460px"><u>V</u>RML...</div>
<div class="t" style="left:249px;top:482px">P<u>N</u>G...</div>
<div class="t" style="left:249px;top:504px"><u>J</u>PEG...</div>
<div class="t" style="left:249px;top:525px"><u>G</u>IF...</div>
<div class="t" style="left:249px;top:546px">TI<u>F</u>F...</div>
<div class="t" style="left:249px;top:568px"><u>B</u>MP...</div>
<div style="position:absolute;left:231px;top:589px;width:170px;height:1px;background:#dadada;"></div>
<div class="t" style="left:249px;top:596px"><u>I</u>GES...</div>
<div class="t" style="left:249px;top:618px">ST<u>E</u>P...</div>
<div class="t" style="left:249px;top:639px">AutoCAD DXF/D<u>W</u>G...</div>
<div style="position:absolute;left:231px;top:660px;width:170px;height:1px;background:#dadada;"></div>
<div class="t" style="left:249px;top:668px"><u>2</u>D Exchange...</div>
<div class="t" style="left:249px;top:689px"><span style="letter-spacing:-0.4px">修复几何体</span>(<u>Y</u>)...</div>
<div class="t" style="left:249px;top:710px">CATIA V<u>4</u>...</div>
<div class="t" style="left:249px;top:732px">CATIA V5...</div>
<svg style="left:12px;top:23px" width="15.0" height="15.0" viewBox="0 0 15 15"><path d="M3,1 H9 L12,4 V13 H3 Z" fill="#f4f4ff" stroke="#8c8ce0" stroke-width="1"/><path d="M9,1 V4 H12" fill="none" stroke="#8c8ce0" stroke-width="0.8"/></svg>
<svg style="left:12px;top:44px" width="15.0" height="15.0" viewBox="0 0 15 15"><path d="M1,4 H5 L6,5 H12 V12 H1 Z" fill="#e8c040" stroke="#b09020" stroke-width="0.6"/><path d="M2,7 H14 L12,13 H1 Z" fill="#f8e070" stroke="#c0a030" stroke-width="0.6"/><path d="M6,3 C8,0 11,0 12,3" stroke="#30a040" stroke-width="1.6" fill="none"/><path d="M10,2 L14,3 L11,6 Z" fill="#30a040"/></svg>
<svg style="left:12px;top:94px" width="15.0" height="15.0" viewBox="0 0 15 15"><rect x="1" y="1" width="12" height="12" fill="#5a6ed0" stroke="#2a3890" stroke-width="0.8"/><rect x="3" y="1.5" width="8" height="5" fill="#eef"/><rect x="4" y="9" width="6" height="4" fill="#101830"/></svg>
<svg style="left:12px;top:116px" width="15.0" height="15.0" viewBox="0 0 15 15"><rect x="1" y="1" width="12" height="12" fill="#5a6ed0" stroke="#2a3890" stroke-width="0.8"/><rect x="3" y="1.5" width="8" height="5" fill="#eef"/><rect x="4" y="9" width="6" height="4" fill="#101830"/><polygon points="10,6 14,8 14,13 10,15 6,13 6,8" fill="#f8d040" stroke="#e0a020" stroke-width="0.7"/><polygon points="10,6 14,8 10,10 6,8" fill="#fff0a0"/></svg>
<svg style="left:12px;top:137px" width="15.0" height="15.0" viewBox="0 0 15 15"><rect x="1" y="1" width="12" height="12" fill="#5a6ed0" stroke="#2a3890" stroke-width="0.8"/><rect x="3" y="1.5" width="8" height="5" fill="#eef"/><rect x="4" y="9" width="6" height="4" fill="#101830"/><path d="M5,4 L13,12" stroke="#e8b820" stroke-width="2.6"/><path d="M4,3 L6,5" stroke="#222" stroke-width="2"/><circle cx="13.5" cy="12.5" r="1" fill="#e02020"/></svg>
<svg style="left:12px;top:158px" width="15.0" height="15.0" viewBox="0 0 15 15"><polygon points="5,1 13,1 13,9 9,13 1,13 1,5" fill="#3848b0" stroke="#202c80" stroke-width="0.7"/><polygon points="5,1 13,1 9,5 1,5" fill="#a8b8f0"/><rect x="3" y="6" width="5" height="5" fill="#6a80e0"/></svg>
<svg style="left:12px;top:237px" width="15.0" height="15.0" viewBox="0 0 15 15"><path d="M2,6 H13 V11 H2 Z" fill="#d8d8d8" stroke="#555" stroke-width="0.8"/><path d="M4,2 H10 L11,6 H4 Z" fill="#fff" stroke="#555" stroke-width="0.7"/><rect x="4" y="10" width="7" height="3" fill="#fff" stroke="#555" stroke-width="0.7"/></svg>
<svg style="left:12px;top:259px" width="15.0" height="15.0" viewBox="0 0 15 15"><path d="M2,6 H13 V11 H2 Z" fill="#d8d8d8" stroke="#555" stroke-width="0.8"/><path d="M4,2 H10 L11,6 H4 Z" fill="#fff" stroke="#555" stroke-width="0.7"/><rect x="4" y="10" width="7" height="3" fill="#fff" stroke="#555" stroke-width="0.7"/></svg>
<svg style="left:12px;top:473px" width="15.0" height="15.0" viewBox="0 0 15 15"><rect x="1" y="2" width="13" height="11" fill="#b8c4cc" stroke="#a0aab0" stroke-width="0.6"/><path d="M4,5 H11 M4,8 H11" stroke="#d8dde0"/></svg>
<svg style="left:12px;top:494px" width="15.0" height="15.0" viewBox="0 0 15 15"><rect x="1" y="1" width="12" height="12" rx="1" fill="#d83030" stroke="#902020" stroke-width="0.8"/><path d="M4.5,4.5 L9.5,9.5 M9.5,4.5 L4.5,9.5" stroke="#fff" stroke-width="1.6"/></svg>
<svg style="left:228px;top:460px" width="16.0" height="16.0" viewBox="0 0 16 16"><text x="0" y="6" font-size="5.6" font-weight="bold" fill="#2e2070" font-family="Liberation Sans" textLength="14.0" lengthAdjust="spacingAndGlyphs">VRML</text><path d="M8.5,9.5 L13,12 L8.5,14.5 Z" fill="#c020c0"/></svg>
<svg style="left:228px;top:482px" width="16.0" height="16.0" viewBox="0 0 16 16"><text x="0" y="6" font-size="5.6" font-weight="bold" fill="#2e2070" font-family="Liberation Sans" textLength="10.8" lengthAdjust="spacingAndGlyphs">PNG</text><path d="M8.5,9.5 L13,12 L8.5,14.5 Z" fill="#c020c0"/></svg>
<svg style="left:228px;top:504px" width="16.0" height="16.0" viewBox="0 0 16 16"><text x="0" y="6" font-size="5.6" font-weight="bold" fill="#2e2070" font-family="Liberation Sans" textLength="14.0" lengthAdjust="spacingAndGlyphs">JPEG</text><path d="M8.5,9.5 L13,12 L8.5,14.5 Z" fill="#c020c0"/></svg>
<svg style="left:228px;top:525px" width="16.0" height="16.0" viewBox="0 0 16 16"><text x="0" y="6" font-size="5.6" font-weight="bold" fill="#2e2070" font-family="Liberation Sans" textLength="10.8" lengthAdjust="spacingAndGlyphs">GIF</text><path d="M8.5,9.5 L13,12 L8.5,14.5 Z" fill="#c020c0"/></svg>
<svg style="left:228px;top:546px" width="16.0" height="16.0" viewBox="0 0 16 16"><text x="0" y="6" font-size="5.6" font-weight="bold" fill="#2e2070" font-family="Liberation Sans" textLength="14.0" lengthAdjust="spacingAndGlyphs">TIFF</text><path d="M8.5,9.5 L13,12 L8.5,14.5 Z" fill="#c020c0"/></svg>
<svg style="left:228px;top:568px" width="16.0" height="16.0" viewBox="0 0 16 16"><text x="0" y="6" font-size="5.6" font-weight="bold" fill="#2e2070" font-family="Liberation Sans" textLength="10.8" lengthAdjust="spacingAndGlyphs">BMP</text><path d="M8.5,9.5 L13,12 L8.5,14.5 Z" fill="#c020c0"/></svg>
<div style="position:absolute;left:410px;top:594px;width:232px;height:52px;background:#fff;border:1px solid #9a9a9a;box-sizing:border-box;box-shadow:2px 2px 2px rgba(0,0,0,.3);"></div>
<div class="t" style="left:417px;top:602px;letter-spacing:0.4px">将部件文件或选定的几何体导出至</div>
<div class="t" style="left:417px;top:621px">IGES 文件。</div>
<svg style="left:828px;top:626px" width="50" height="22">
<ellipse cx="20.6" cy="12.4" rx="6.6" ry="8" fill="#f6f6f6" stroke="#c8c8c8" stroke-width="1"/>
<ellipse cx="36.6" cy="14" rx="7" ry="8" fill="#f6f6f6" stroke="#c8c8c8" stroke-width="1"/>
<ellipse cx="8" cy="21" rx="5" ry="4" fill="#f6f6f6" stroke="#c8c8c8" stroke-width="1"/>
</svg>
<div style="position:absolute;left:743px;top:646px;width:257px;height:92px;background:#323232;"></div>
<svg style="left:785px;top:660px" width="70" height="65" viewBox="0 0 795 738">
<path d="M350,80 C250,60 150,90 120,200 C95,300 100,470 150,570 C200,660 300,660 400,620 C520,570 650,470 660,360 C665,280 600,220 550,190 L430,290 C500,330 510,390 430,440 C350,480 220,480 190,420 C170,370 210,320 255,292 Z" fill="#fdca00"/>
<path d="M262,292 L455,130" stroke="#fdca00" stroke-width="20" stroke-linecap="round"/>
<circle cx="275" cy="385" r="24" fill="#fdca00"/>
</svg>
<div style="position:absolute;left:852px;top:664px;font-size:29px;line-height:40px;color:#ffd400;white-space:nowrap;letter-spacing:-1px">羽兔网</div>
<div style="position:absolute;left:853px;top:702px;font-size:13px;line-height:16px;color:#ffd400;white-space:nowrap;transform-origin:0 0;transform:scaleX(0.85)">WWW.YUTU.CN</div>
<div style="position:absolute;left:743px;top:645px;width:257px;height:1px;background:#fafafa;"></div>
</body></html>
